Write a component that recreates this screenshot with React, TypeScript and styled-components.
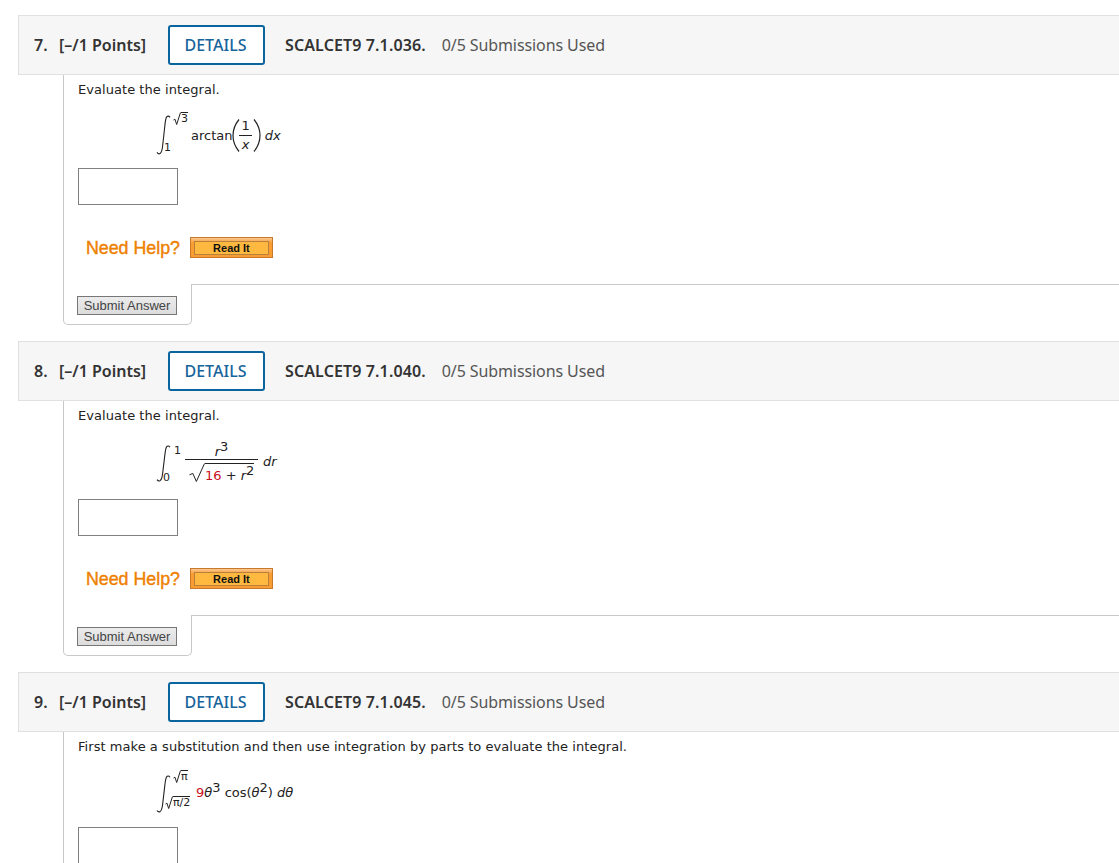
import React from "react";
import styled, { createGlobalStyle } from "styled-components";

const GlobalStyle = createGlobalStyle`
  html, body {
    margin: 0;
    padding: 0;
    background: #fff;
    overflow: hidden;
  }
  body {
    height: 863px;
    font-family: "DejaVu Sans", Verdana, sans-serif;
    color: #222;
  }
`;

const IntegralSign = ({ height, drop = 0 }: { height: number; drop?: number }) => (
  <IntegralSvg $drop={drop} width="15" height={height} viewBox="0 0 15 40" preserveAspectRatio="none">
    <path
      d="M14 2.4 C12.8 .6 10.9 .7 10.1 3 C9.4 5.4 9 9 8.6 13 L6.6 31 C6.2 35 5.4 37.6 4 38.6 C3 39.1 1.8 38.6 1 37.4"
      fill="none"
      stroke="#222"
      strokeWidth="1.1"
    />
  </IntegralSvg>
);

const RadicalSign = ({ width, height }: { width: number; height: number }) => (
  <RadicalSvg width={width} height={height} viewBox={`0 0 ${width} ${height}`}>
    <path
      d={`M.5 ${height * 0.62} L${width * 0.24} ${height * 0.55} L${width * 0.46} ${height - 0.5} L${width - 0.5} .5`}
      fill="none"
      stroke="#222"
      strokeWidth="1"
    />
  </RadicalSvg>
);

const Sqrt = ({ width = 8, height, big, children }: { width?: number; height: number; big?: boolean; children: React.ReactNode }) => (
  <SqrtWrap>
    <RadicalSign width={width} height={height} />
    <Radicand $big={big}>{children}</Radicand>
  </SqrtWrap>
);

const Bracket = ({ side }: { side: "left" | "right" }) => (
  <BracketSvg width="8" height="33" viewBox="0 0 8 33">
    <path
      d={side === "left" ? "M7 .5 C2.5 6 1 11 1 16.5 C1 22 2.5 27 7 32.5" : "M1 .5 C5.5 6 7 11 7 16.5 C7 22 5.5 27 1 32.5"}
      fill="none"
      stroke="#222"
      strokeWidth="1.2"
    />
  </BracketSvg>
);

const Question7 = () => (
  <MathRow $height={47} $top={4}>
    <IntegralSign height={40} />
    <Limits $width={20} $bottom={1}>
      <UpperLimit $shift={2}>
        <Sqrt height={13}>3</Sqrt>
      </UpperLimit>
      <LowerLimit $shift={-7}>1</LowerLimit>
    </Limits>
    <Expr $top={3}>
      <span>arctan</span>
      <Bracket side="left" />
      <Fraction>
        <Num>1</Num>
        <Den>
          <I>x</I>
        </Den>
      </Fraction>
      <Bracket side="right" />
      <Term $gap={4}>
        <I>dx</I>
      </Term>
    </Expr>
  </MathRow>
);

const Question8 = () => (
  <MathRow $height={52} $top={6}>
    <IntegralSign height={37} drop={4} />
    <Limits $width={14} $top={4} $bottom={2}>
      <UpperLimit $shift={3}>1</UpperLimit>
      <LowerLimit $shift={-8}>0</LowerLimit>
    </Limits>
    <Expr $height={42}>
      <WideFraction>
        <WideNum>
          <I>r</I>
          <Sup>3</Sup>
        </WideNum>
        <WideDen>
          <Sqrt width={16} height={19} big>
            <Red>16</Red> + <I>r</I>
            <Sup>2</Sup>
          </Sqrt>
        </WideDen>
      </WideFraction>
      <Term $gap={5}>
        <I>dr</I>
      </Term>
    </Expr>
  </MathRow>
);

const Question9 = () => (
  <MathRow $height={49} $top={5}>
    <IntegralSign height={38} drop={1} />
    <Limits $width={20} $bottom={2}>
      <UpperLimit $shift={2}>
        <Sqrt height={13}>π</Sqrt>
      </UpperLimit>
      <LowerLimit $shift={-6}>
        <Sqrt height={13}>π/2</Sqrt>
      </LowerLimit>
    </Limits>
    <Expr>
      <Term $gap={5}>
        <Red>9</Red>
        <I>θ</I>
        <Sup>3</Sup> cos(<I>θ</I>
        <Sup>2</Sup>) <I>dθ</I>
      </Term>
    </Expr>
  </MathRow>
);

const questions = [
  {
    no: 7,
    code: "SCALCET9 7.1.036.",
    prompt: "Evaluate the integral.",
    math: <Question7 />,
    partial: false,
  },
  {
    no: 8,
    code: "SCALCET9 7.1.040.",
    prompt: "Evaluate the integral.",
    math: <Question8 />,
    partial: false,
  },
  {
    no: 9,
    code: "SCALCET9 7.1.045.",
    prompt: "First make a substitution and then use integration by parts to evaluate the integral.",
    math: <Question9 />,
    partial: true,
  },
];

export default function App() {
  return (
    <>
      <GlobalStyle />
      <Page>
        {questions.map((q) => (
          <Question key={q.no}>
            <Header>
              <Number>{q.no}.</Number>
              <Points>[–/1 Points]</Points>
              <DetailsButton>DETAILS</DetailsButton>
              <Code>{q.code}</Code>
              <Submissions>0/5 Submissions Used</Submissions>
            </Header>
            <Content $hasFooter={!q.partial}>
              <Prompt>{q.prompt}</Prompt>
              {q.math}
              <AnswerInput />
              {!q.partial && (
                <HelpRow>
                  <HelpLabel>Need Help?</HelpLabel>
                  <ReadIt>
                    <ReadItInner>Read It</ReadItInner>
                  </ReadIt>
                </HelpRow>
              )}
            </Content>
            {!q.partial && (
              <Footer>
                <SubmitTab>
                  <SubmitButton>Submit Answer</SubmitButton>
                </SubmitTab>
                <FooterLine />
              </Footer>
            )}
          </Question>
        ))}
      </Page>
    </>
  );
}

const Page = styled.div`
  display: flex;
  flex-direction: column;
  gap: 16px;
  padding: 15px 0 0 18px;
  height: 863px;
  box-sizing: border-box;
  overflow: hidden;
`;

const Question = styled.section`
  display: flex;
  flex-direction: column;
`;

const Header = styled.header`
  display: flex;
  align-items: center;
  box-sizing: border-box;
  height: 60px;
  padding-left: 15px;
  background: #f6f6f6;
  border: 1px solid #e0e0e0;
  border-right: 0;
  font-family: "Noto Sans", sans-serif;
  font-size: 16px;
  color: #333;
`;

const Number = styled.span`
  font-weight: 600;
  width: 25px;
`;

const Points = styled.span`
  font-weight: 600;
  width: 109px;
`;

const DetailsButton = styled.button`
  box-sizing: border-box;
  width: 97px;
  height: 40px;
  padding: 0 2px 0 0;
  background: #fff;
  border: 2px solid #0a659f;
  border-radius: 3px;
  color: #17649b;
  font-family: "Noto Sans", sans-serif;
  font-size: 16px;
  font-weight: 500;
`;

const Code = styled.span`
  margin-left: 20px;
  font-weight: 600;
  letter-spacing: 0.12px;
`;

const Submissions = styled.span`
  margin-left: 16px;
  color: #555;
  letter-spacing: -0.1px;
`;

const Content = styled.div<{ $hasFooter: boolean }>`
  display: flex;
  flex-direction: column;
  margin-left: 45px;
  padding: 7px 0 ${({ $hasFooter }) => ($hasFooter ? 26 : 0)}px 14px;
  border-left: 1px solid #c8c8c8;
`;

const Prompt = styled.p`
  margin: 0;
  font-size: 13px;
  line-height: 16px;
  letter-spacing: 0.05px;
  color: #222;
`;

const MathRow = styled.div<{ $height: number; $top: number }>`
  display: flex;
  align-items: stretch;
  box-sizing: border-box;
  height: ${({ $height }) => $height}px;
  margin: 10px 0 0 78px;
  padding-top: ${({ $top }) => $top}px;
  font-size: 13px;
  color: #222;
`;

const IntegralSvg = styled.svg<{ $drop: number }>`
  flex: none;
  align-self: flex-end;
  margin-bottom: ${({ $drop }) => $drop}px;
`;

const RadicalSvg = styled.svg`
  flex: none;
`;

const BracketSvg = styled.svg`
  flex: none;
`;

const Limits = styled.span<{ $width: number; $top?: number; $bottom?: number }>`
  display: flex;
  flex-direction: column;
  justify-content: space-between;
  align-items: flex-start;
  flex: none;
  width: ${({ $width }) => $width}px;
  box-sizing: border-box;
  padding: ${({ $top }) => $top ?? 0}px 0 ${({ $bottom }) => $bottom ?? 0}px;
  font-size: 11px;
  line-height: 13px;
`;

const UpperLimit = styled.span<{ $shift: number }>`
  margin-left: ${({ $shift }) => $shift}px;
`;

const LowerLimit = styled.span<{ $shift: number }>`
  margin-left: ${({ $shift }) => $shift}px;
`;

const Expr = styled.span<{ $top?: number; $height?: number }>`
  display: flex;
  align-items: center;
  align-self: ${({ $height }) => ($height ? "flex-start" : "center")};
  height: ${({ $height }) => ($height ? `${$height}px` : "auto")};
  margin-top: ${({ $top }) => $top ?? 0}px;
`;

const SqrtWrap = styled.span`
  display: inline-flex;
  align-items: flex-start;
`;

const Radicand = styled.span<{ $big?: boolean }>`
  border-top: 1px solid #222;
  padding-top: ${({ $big }) => ($big ? 4 : 0)}px;
  line-height: ${({ $big }) => ($big ? 15 : 12)}px;
  white-space: pre-wrap;
`;

const Term = styled.span<{ $gap?: number }>`
  margin-left: ${({ $gap }) => $gap ?? 0}px;
  white-space: pre-wrap;
`;

const Fraction = styled.span`
  display: inline-flex;
  flex-direction: column;
  align-items: stretch;
  margin: 0 1px 0 -1px;
  text-align: center;
`;

const Num = styled.span`
  border-bottom: 1px solid #222;
  padding: 0 2px 2px;
  line-height: 15px;
`;

const Den = styled.span`
  padding: 1px 2px 0;
  line-height: 15px;
`;

const WideFraction = styled.span`
  display: inline-flex;
  flex-direction: column;
  width: 73px;
  text-align: center;
`;

const WideNum = styled.span`
  height: 19px;
  border-bottom: 1px solid #222;
  line-height: 24px;
`;

const WideDen = styled.span`
  display: flex;
  padding: 3px 0 0 4px;
`;

const I = styled.i`
  font-style: italic;
`;

const Red = styled.span`
  color: #c8101c;
`;

const Sup = styled.sup`
  font-size: 13px;
  line-height: 0;
  vertical-align: 5px;
`;

const AnswerInput = styled.input`
  box-sizing: border-box;
  width: 100px;
  height: 37px;
  margin-top: 13px;
  padding: 0;
  background: #fff;
  border: 1px solid #808080;
  border-radius: 0;
`;

const HelpRow = styled.div`
  display: flex;
  gap: 10px;
  height: 21px;
  margin: 32px 0 0 8px;
`;

const HelpLabel = styled.span`
  align-self: flex-end;
  font-family: "Liberation Sans", Arial, sans-serif;
  font-size: 17.8px;
  line-height: 20px;
  color: #ee8000;
  -webkit-text-stroke: 0.4px #ee8000;
`;

const ReadIt = styled.div`
  box-sizing: border-box;
  width: 83px;
  height: 21px;
  padding: 3px 3px 2px;
  background: linear-gradient(#fbc894, #f99d32 25%);
  border: 1px solid #c77a2a;
`;

const ReadItInner = styled.div`
  box-sizing: border-box;
  height: 100%;
  background: #ffb940;
  border: 1px solid #b8803a;
  font-family: "Liberation Sans", Arial, sans-serif;
  font-size: 11px;
  font-weight: 700;
  line-height: 13px;
  text-align: center;
  color: #111;
`;

const Footer = styled.div`
  display: flex;
  margin-left: 45px;
`;

const SubmitTab = styled.div`
  box-sizing: border-box;
  flex: none;
  width: 129px;
  height: 41px;
  padding: 12px 0 0 13px;
  border: 1px solid #c8c8c8;
  border-top: 0;
  border-bottom-left-radius: 5px;
  border-bottom-right-radius: 5px;
`;

const SubmitButton = styled.button`
  display: block;
  box-sizing: border-box;
  width: 100px;
  height: 19px;
  padding: 0;
  background: linear-gradient(#ececec, #dcdcdc);
  border: 1px solid #777;
  font-family: "Liberation Sans", Arial, sans-serif;
  font-size: 13px;
  line-height: 16px;
  color: #444;
`;

const FooterLine = styled.div`
  flex: 1;
  border-top: 1px solid #c8c8c8;
`;
